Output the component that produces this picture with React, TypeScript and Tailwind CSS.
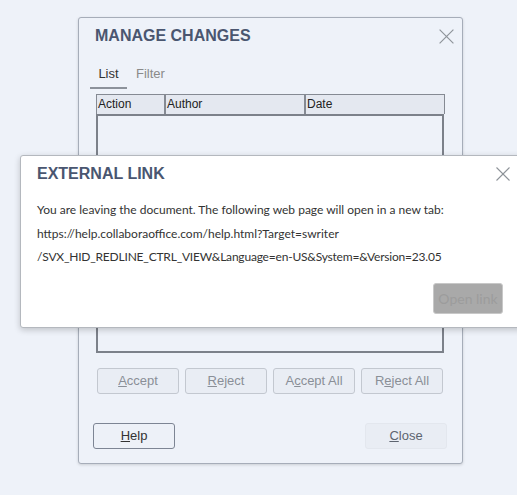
import React from "react";

function XIcon({ className }: { className?: string }) {
  return (
    <svg viewBox="0 0 16 16" className={className} fill="none" stroke="currentColor" strokeWidth="1.1">
      <line x1="1.5" y1="1.5" x2="14.5" y2="14.5" />
      <line x1="14.5" y1="1.5" x2="1.5" y2="14.5" />
    </svg>
  );
}

function Btn({ children, dark }: { children: React.ReactNode; dark?: boolean }) {
  return (
    <div
      className={
        "w-[82px] h-[26px] flex items-center justify-center rounded-[3px] border text-[13px] " +
        (dark ? "border-[#7d8594] text-[#333] bg-[#edf1f8]" : "border-[#c3c8d0] text-[#8a8f97] bg-[#e9edf4]")
      }
    >
      {children}
    </div>
  );
}

export default function App() {
  const sans = { fontFamily: '"Liberation Sans", Arial, sans-serif' };
  const body = { fontFamily: 'Lato, "Noto Sans", sans-serif' };
  return (
    <div className="relative w-[517px] h-[495px] bg-[#eef2f9] overflow-hidden" style={sans}>
      {/* Manage changes dialog */}
      <div className="absolute left-[78px] top-[17px] w-[385px] h-[447px] bg-[#eef2f9] border border-[#a6adb9] rounded-[3px] shadow-[0_1px_3px_rgba(0,0,0,0.15)] flex flex-col">
        <div className="h-[36px] flex items-center justify-between pl-[16px] pr-[7px]">
          <span className="text-[16px] font-bold text-[#4a5670]">MANAGE CHANGES</span>
          <XIcon className="w-[17px] h-[17px] text-[#8e9399]" />
        </div>
        <div className="flex pl-[11px] mt-[10px]">
          <div className="w-[37px] flex justify-center border-b-2 border-[#8c929b] pb-[3px]">
            <span className="text-[13px] text-[#333]">List</span>
          </div>
          <span className="text-[13px] text-[#8a8a8a] ml-[9px]">Filter</span>
        </div>
        <div className="ml-[17px] mt-[5px] w-[349px] flex flex-col">
          <div className="flex h-[20px] bg-[#e4e8f0] border border-[#858a93] border-b-0 text-[12px] text-[#222]">
            <div className="w-[69px] border-r-2 border-[#858a93] pl-[1px] leading-[19px]">Action</div>
            <div className="w-[140px] border-r-2 border-[#858a93] pl-[1px] leading-[19px]">Author</div>
            <div className="flex-1 pl-[1px] leading-[19px]">Date</div>
          </div>
          <div className="w-[348px] h-[239px] border-2 border-[#7c818a]" />
        </div>
        <div className="flex gap-[6px] ml-[18px] mt-[15px]">
          <Btn><span><u>A</u>ccept</span></Btn>
          <Btn><span><u>R</u>eject</span></Btn>
          <Btn><span>A<u>c</u>cept All</span></Btn>
          <Btn><span>R<u>e</u>ject All</span></Btn>
        </div>
        <div className="flex justify-between ml-[14px] mr-[15px] mt-[29px]">
          <Btn dark><span><u>H</u>elp</span></Btn>
          <div className="w-[82px] h-[26px] flex items-center justify-center rounded-[3px] border border-[#e3e7ee] bg-[#e9edf4] text-[13px] text-[#5d6470]">
            <span><u>C</u>lose</span>
          </div>
        </div>
      </div>

      {/* External link dialog */}
      <div className="absolute left-[20px] top-[155px] w-[510px] h-[173px] bg-white border border-[#b4b8be] rounded-[3px] shadow-[0_2px_6px_rgba(0,0,0,0.2)] flex flex-col">
        <div className="h-[35px] flex items-center justify-between pl-[16px] pr-[18px] pt-[1px]">
          <span className="text-[16px] font-bold text-[#4a5670]">EXTERNAL LINK</span>
          <XIcon className="w-[16px] h-[16px] text-[#8e9399]" />
        </div>
        <div className="pl-[16px] pt-[7px] text-[12px] text-[#333] leading-[23.5px]" style={body}>
          <div>You are leaving the document. The following web page will open in a new tab:</div>
          <div>https://help.collaboraoffice.com/help.html?Target=swriter</div>
          <div className="tracking-[-0.2px]">/SVX_HID_REDLINE_CTRL_VIEW&amp;Language=en-US&amp;System=&amp;Version=23.05</div>
        </div>
        <div className="flex pl-[412px] mt-[14px]">
          <div className="w-[70px] h-[31px] rounded-[3px] bg-[#a9a9a9] border border-[#c8c8c8] flex items-center justify-center text-[14px] text-[#9c9c9c]" style={body}>
            Open link
          </div>
        </div>
      </div>
    </div>
  );
}
